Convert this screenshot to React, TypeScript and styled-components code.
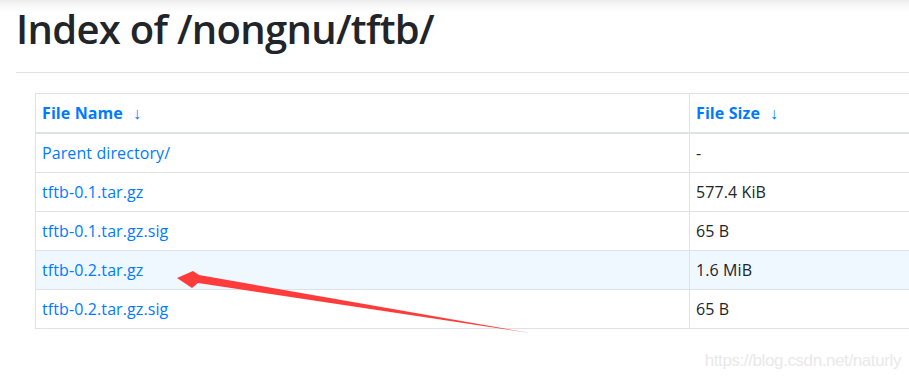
import React from 'react'
import styled, { createGlobalStyle } from 'styled-components'

const GlobalStyle = createGlobalStyle`
  html, body {
    margin: 0;
    padding: 0;
    background: #fff;
    overflow: hidden;
  }
  body {
    font-family: 'Open Sans', 'Noto Sans', sans-serif;
    color: #212529;
  }
`

const Page = styled.div`
  position: relative;
  width: 909px;
  height: 377px;
  overflow: hidden;
  padding: 5px 0 0 16px;
  box-sizing: border-box;
  background: linear-gradient(#ececec 0, #f7f7f7 5px, #fff 12px);
`

const Title = styled.h1`
  margin: 0 0 19px;
  font-size: 40px;
  font-weight: 600;
  line-height: 48px;
  letter-spacing: -0.7px;
  color: #212529;
`

const Rule = styled.hr`
  margin: 0 0 20px;
  border: 0;
  border-top: 1px solid #dee2e6;
`

const Listing = styled.div`
  margin-left: 19px;
  width: 1000px;
  border-top: 1px solid #dee2e6;
  border-left: 1px solid #dee2e6;
`

const Row = styled.div<{ $hover?: boolean }>`
  display: grid;
  grid-template-columns: 654px 1fr;
  background: ${({ $hover }) => ($hover ? '#eff7ff' : 'transparent')};
`

const Cell = styled.div<{ $head?: boolean }>`
  padding: 7px 6px;
  line-height: 24px;
  font-size: 16px;
  letter-spacing: 0.1px;
  border-right: 1px solid #dee2e6;
  border-bottom: ${({ $head }) => ($head ? '2px' : '1px')} solid #dee2e6;
  font-weight: ${({ $head }) => ($head ? 700 : 400)};
  white-space: nowrap;
`

const Link = styled.a`
  color: #007bff;
  text-decoration: none;
`

const SortArrow = styled.span`
  font-weight: 400;
  margin-left: 10px;
`

const Pointer = styled.svg`
  position: absolute;
  left: 0;
  top: 0;
  pointer-events: none;
`

const Watermark = styled.div`
  position: absolute;
  right: 8px;
  bottom: 6px;
  font-family: 'Liberation Sans', Arial, sans-serif;
  font-size: 17px;
  line-height: 20px;
  color: #e9e9e9;
  letter-spacing: -0.4px;
`

const FILES = [
  { name: 'Parent directory/', size: '-' },
  { name: 'tftb-0.1.tar.gz', size: '577.4 KiB' },
  { name: 'tftb-0.1.tar.gz.sig', size: '65 B' },
  { name: 'tftb-0.2.tar.gz', size: '1.6 MiB', hover: true },
  { name: 'tftb-0.2.tar.gz.sig', size: '65 B' },
]

export default function App() {
  return (
    <Page>
      <GlobalStyle />
      <Title>Index of /nongnu/tftb/</Title>
      <Rule />
      <Listing>
        <Row>
          <Cell $head>
            <Link href="#">File Name<SortArrow>↓</SortArrow></Link>
          </Cell>
          <Cell $head>
            <Link href="#">File Size<SortArrow>↓</SortArrow></Link>
          </Cell>
        </Row>
        {FILES.map(f => (
          <Row key={f.name} $hover={f.hover}>
            <Cell>
              <Link href="#">{f.name}</Link>
            </Cell>
            <Cell>{f.size}</Cell>
          </Row>
        ))}
      </Listing>
      <Pointer width="909" height="377" viewBox="0 0 909 377">
        <polygon
          points="177,278 193,271 199,275 530,333 198,283 192,288"
          fill="#ff3b3b"
        />
      </Pointer>
      <Watermark>https://blog.csdn.net/naturly</Watermark>
    </Page>
  )
}
